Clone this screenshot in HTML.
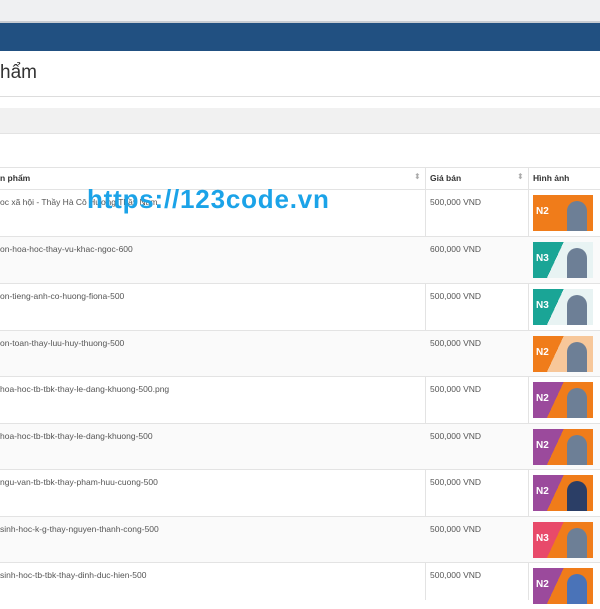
<html><head><style>
body{margin:0;width:600px;height:600px;overflow:hidden;background:#fff;font-family:"Liberation Sans","Noto Sans CJK SC",sans-serif;position:relative}
.a{position:absolute}
.row{position:absolute;left:0;width:600px;height:46px;border-top:1px solid #e3e3e3}
.c1{position:absolute;left:0;top:7px;font-size:8.5px;color:#555}
.c2{position:absolute;left:430px;top:7px;font-size:8.5px;color:#555}
.img{position:absolute;left:533px;top:5px;width:60px;height:36px;background:linear-gradient(115deg,var(--c) 0 40%,#f07c1a 40%);}
.img b{position:absolute;left:3px;top:11px;color:#fff;font-size:10px}
.img i{position:absolute;right:6px;bottom:0;width:20px;height:30px;border-radius:10px 10px 0 0;background:#6d7f96}
.v{position:absolute;top:167px;width:1px;height:433px;background:#e3e3e3}
</style></head><body>
<div class="a" style="left:0;top:0;width:600px;height:21px;background:#eff0f2"></div>
<div class="a" style="left:0;top:21px;width:600px;height:2px;background:#c8ccd2"></div>
<div class="a" style="left:0;top:23px;width:600px;height:28px;background:#215081"></div>
<div class="a" style="left:0;top:62px;font-size:19px;color:#333">hẩm</div>
<div class="a" style="left:0;top:96px;width:600px;height:1px;background:#ddd"></div>
<div class="a" style="left:0;top:108px;width:600px;height:25px;background:#f1f1f1;border-bottom:1px solid #e3e3e3"></div>
<div class="a" style="left:0;top:167px;width:600px;height:22px;border-top:1px solid #e3e3e3"></div>
<div class="a" style="left:0;top:173px;font-size:8.5px;font-weight:bold;color:#333">n phẩm</div>
<div class="a" style="left:414px;top:172px;font-size:8px;color:#aaa">⬍</div>
<div class="a" style="left:430px;top:173px;font-size:8.5px;font-weight:bold;color:#333">Giá bán</div>
<div class="a" style="left:517px;top:172px;font-size:8px;color:#aaa">⬍</div>
<div class="a" style="left:533px;top:173px;font-size:8.5px;font-weight:bold;color:#333">Hình ảnh</div>
<div class="v" style="left:425px"></div><div class="v" style="left:528px"></div>
<div class="row" style="top:189px"><span class="c1">oc xã hội - Thầy Hà Cô Hương Thầy Nam</span><span class="c2">500,000 VND</span><div class="img" style="--c:#f07c1a"><b>N2</b><i></i></div></div>
<div class="row" style="top:236px;background:#fafafa"><span class="c1">on-hoa-hoc-thay-vu-khac-ngoc-600</span><span class="c2">600,000 VND</span><div class="img" style="background:linear-gradient(115deg,#1aa596 0 40%,#e8f3f3 40%)"><b>N3</b><i></i></div></div>
<div class="row" style="top:283px"><span class="c1">on-tieng-anh-co-huong-fiona-500</span><span class="c2">500,000 VND</span><div class="img" style="background:linear-gradient(115deg,#1aa596 0 40%,#e8f3f3 40%)"><b>N3</b><i></i></div></div>
<div class="row" style="top:330px;background:#fafafa"><span class="c1">on-toan-thay-luu-huy-thuong-500</span><span class="c2">500,000 VND</span><div class="img" style="background:linear-gradient(115deg,#f07c1a 0 40%,#f7c79a 40%)"><b>N2</b><i></i></div></div>
<div class="row" style="top:376px"><span class="c1">hoa-hoc-tb-tbk-thay-le-dang-khuong-500.png</span><span class="c2">500,000 VND</span><div class="img" style="--c:#9b4a9c"><b>N2</b><i></i></div></div>
<div class="row" style="top:423px;background:#fafafa"><span class="c1">hoa-hoc-tb-tbk-thay-le-dang-khuong-500</span><span class="c2">500,000 VND</span><div class="img" style="--c:#9b4a9c"><b>N2</b><i></i></div></div>
<div class="row" style="top:469px"><span class="c1">ngu-van-tb-tbk-thay-pham-huu-cuong-500</span><span class="c2">500,000 VND</span><div class="img" style="--c:#9b4a9c"><b>N2</b><i style="background:#2b3e66"></i></div></div>
<div class="row" style="top:516px;background:#fafafa"><span class="c1">sinh-hoc-k-g-thay-nguyen-thanh-cong-500</span><span class="c2">500,000 VND</span><div class="img" style="--c:#e84a6a"><b>N3</b><i></i></div></div>
<div class="row" style="top:562px"><span class="c1">sinh-hoc-tb-tbk-thay-dinh-duc-hien-500</span><span class="c2">500,000 VND</span><div class="img" style="--c:#9b4a9c"><b>N2</b><i style="background:#4a73b8"></i></div></div>
<div class="a" style="left:87px;top:184px;font-size:26px;font-weight:bold;color:#1ba3e8;font-family:'Liberation Sans',sans-serif;letter-spacing:0.8px">https://123code.vn</div>
</body></html>
